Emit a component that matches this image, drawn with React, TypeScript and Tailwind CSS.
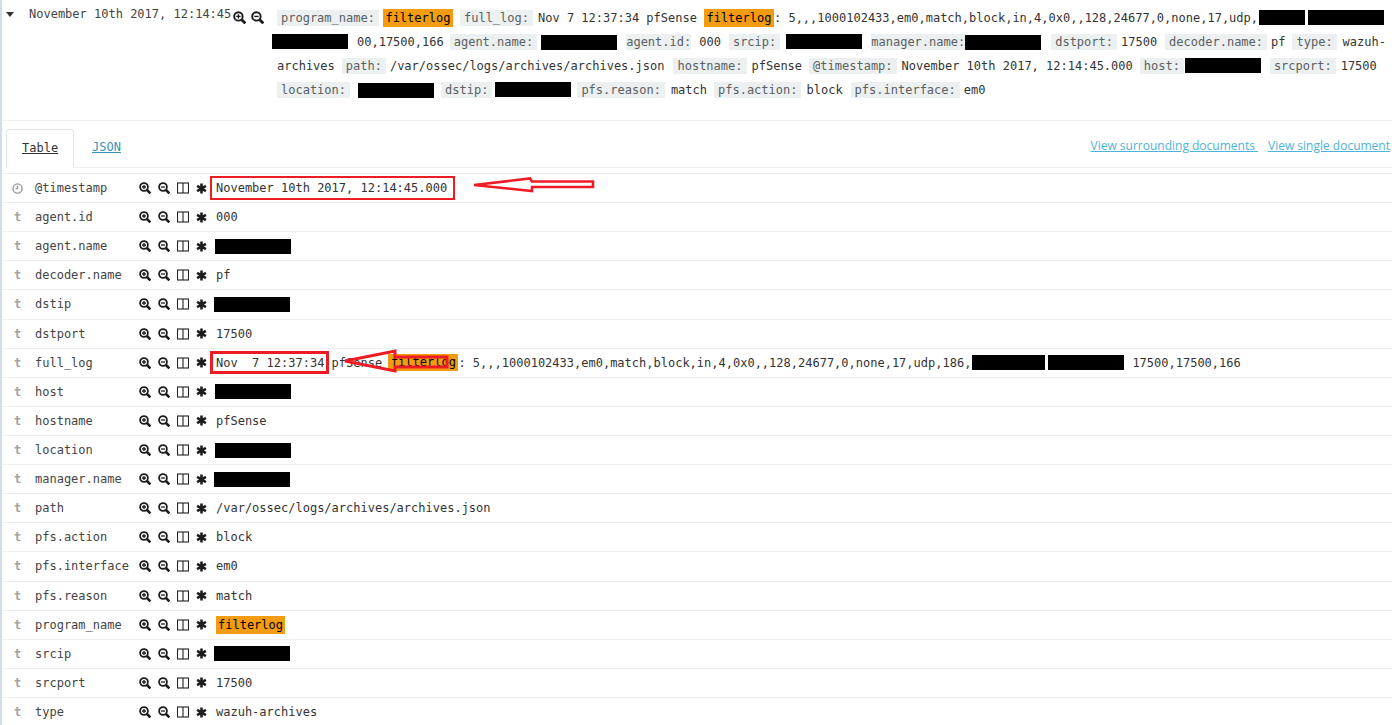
import React from "react";

const MONO = "font-['DejaVu_Sans_Mono',monospace] text-[12px]";

function L({ children, className = "", tight = false }: { children: React.ReactNode; className?: string; tight?: boolean }) {
  return (
    <span className={`h-[16px] leading-[16px] bg-[#ecf0f1] text-[#5a5f61] whitespace-pre ${tight ? "" : "px-[4px]"} ${className}`}>
      {children}
    </span>
  );
}
function V({ children, className = "" }: { children: React.ReactNode; className?: string }) {
  return <span className={`whitespace-pre text-[#333] ${className}`}>{children}</span>;
}
function B({ className = "" }: { className?: string }) {
  return <span className={`inline-block bg-black w-[76px] h-[15px] ${className}`} />;
}
function HL({ children, className = "" }: { children: React.ReactNode; className?: string }) {
  return <span className={`h-[18px] leading-[18px] px-[2.5px] bg-[#f39c12] text-black whitespace-pre ${className}`}>{children}</span>;
}

function ZoomIn({ className = "w-[12px] h-[12px]" }: { className?: string }) {
  return (
    <svg viewBox="0 0 12 12" className={className} fill="none" stroke="#1c1c1c" strokeWidth="1.8">
      <circle cx="5" cy="5" r="3.9" />
      <path d="M8 8l3.4 3.4" strokeWidth="2.6" />
      <path d="M3 5h4M5 3v4" strokeWidth="1.3" />
    </svg>
  );
}
function ZoomOut({ className = "w-[12px] h-[12px] ml-[7px]" }: { className?: string }) {
  return (
    <svg viewBox="0 0 12 12" className={className} fill="none" stroke="#1c1c1c" strokeWidth="1.8">
      <circle cx="5" cy="5" r="3.9" />
      <path d="M8 8l3.4 3.4" strokeWidth="2.6" />
      <path d="M3 5h4" strokeWidth="1.3" />
    </svg>
  );
}
function Columns() {
  return (
    <svg viewBox="0 0 12 12" className="w-[12px] h-[12px] ml-[7px]" fill="none" stroke="#222" strokeWidth="1.1">
      <rect x="0.5" y="1" width="11" height="10" />
      <path d="M6 1v10" />
    </svg>
  );
}
function Asterisk() {
  return (
    <svg viewBox="0 0 12 12" className="w-[11px] h-[11px] ml-[7px]" fill="none" stroke="#1c1c1c" strokeWidth="2.8">
      <path d="M6 .5v11M1.2 3.2l9.6 5.6M10.8 3.2l-9.6 5.6" />
    </svg>
  );
}

function Row({ type = "t", name, children }: { type?: string; name: string; children?: React.ReactNode }) {
  return (
    <div className="h-[29.11px] flex items-center border-b border-[#ecf0f1] shrink-0">
      <span className="w-[33px] pl-[12px] text-[#a3a3a3] flex items-center font-bold">
        {type === "clock" ? (
          <svg viewBox="0 0 12 12" className="w-[11px] h-[11px] -ml-[2px]" fill="none" stroke="#9a9a9a" strokeWidth="1.5">
            <circle cx="6" cy="6" r="5" />
            <path d="M6 3v3.2H4" />
          </svg>
        ) : (
          "t"
        )}
      </span>
      <span className="w-[104px] text-[#444] whitespace-pre">{name}</span>
      <span className="flex items-center w-[77px]">
        <ZoomIn />
        <ZoomOut />
        <Columns />
        <Asterisk />
      </span>
      <span className="flex items-center whitespace-pre text-[#333]">{children}</span>
    </div>
  );
}

const RB = ({ className = "w-[76px]" }: { className?: string }) => <span className={`inline-block bg-black h-[15px] ${className}`} />;

export default function App() {
  return (
    <div className={`relative w-[1392px] h-[725px] overflow-hidden bg-white border-l-2 border-[#d4dce8] ${MONO}`}>
      <div className="h-[121px] border-b border-[#ecf0f1] flex">
        <div className="w-[275px] shrink-0 flex items-start pt-[8px] pl-[4px]">
          <span className="mt-[4px] w-0 h-0 border-x-[4px] border-x-transparent border-t-[5px] border-t-[#333]" />
          <span className="ml-[15px] text-[#444] whitespace-pre leading-[12px]">November 10th 2017, 12:14:45</span>
          <ZoomIn className="w-[13px] h-[13px] ml-[2px] mt-[3px]" />
          <ZoomOut className="w-[13px] h-[13px] ml-[5px] mt-[3px]" />
        </div>
        <div className="pt-[6px] flex flex-col text-[#333]">
          <div className="h-6 flex items-center">
            <L>program_name:</L>
            <HL className="ml-[4px]">filterlog</HL>
            <L className="ml-[7px]">full_log:</L>
            <V className="ml-[5px]">Nov 7 12:37:34 pfSense</V>
            <HL className="ml-[7px]">filterlog</HL>
            <V>: 5,,,1000102433,em0,match,block,in,4,0x0,,128,24677,0,none,17,udp,</V>
            <span className="inline-block bg-black w-[46px] h-[15px] ml-[1px] -mt-[1px]" />
            <B className="ml-[3px] -mt-[1px]" />
          </div>
          <div className="h-6 flex items-center -ml-[5px]">
            <B className="-mt-[1px]" />
            <V className="ml-[9px]">00,17500,166</V>
            <L className="ml-[6px]">agent.name:</L>
            <B className="ml-[4px]" />
            <L className="ml-[9px]" tight>agent.id:</L>
            <V className="ml-[8px]">000</V>
            <L className="ml-[8px]">srcip:</L>
            <B className="ml-[6px] -mt-[1px]" />
            <L className="ml-[9px]" tight>manager.name:</L>
            <B />
            <L className="ml-[10px]">dstport:</L>
            <V className="ml-[4px]">17500</V>
            <L className="ml-[8px]">decoder.name:</L>
            <V className="ml-[4px]">pf</V>
            <L className="ml-[7px]">type:</L>
            <V className="ml-[6px]">wazuh-</V>
          </div>
          <div className="h-6 flex items-center">
            <V>archives</V>
            <L className="ml-[7px]">path:</L>
            <V className="ml-[4px]">/var/ossec/logs/archives/archives.json</V>
            <L className="ml-[9px]">hostname:</L>
            <V className="ml-[5px]">pfSense</V>
            <L className="ml-[7px]">@timestamp:</L>
            <V className="ml-[5px]">November 10th 2017, 12:14:45.000</V>
            <L className="ml-[7px]">host:</L>
            <B className="ml-[1px] -mt-[1px]" />
            <L className="ml-[9px]">srcport:</L>
            <V className="ml-[5px]">17500</V>
          </div>
          <div className="h-6 flex items-center">
            <L>location:</L>
            <B className="ml-[8px]" />
            <L className="ml-[7px]">dstip:</L>
            <B className="ml-[3px] -mt-[1px]" />
            <L className="ml-[6px]">pfs.reason:</L>
            <V className="ml-[6px]">match</V>
            <L className="ml-[7px]">pfs.action:</L>
            <V className="ml-[5px]">block</V>
            <L className="ml-[8px]">pfs.interface:</L>
            <V className="ml-[4px]">em0</V>
          </div>
        </div>
      </div>

      <div className="h-[47px] flex items-end ml-[4px] border-b border-[#ecf0f1] relative">
        <div className="w-[68px] h-[39px] border border-b-0 border-[#e3e7ea] rounded-t-[3px] bg-white flex items-center pl-[15px] pb-[2px] -mb-[1px]">
          <span className="underline text-[#333]">Table</span>
        </div>
        <div className="h-[38px] flex items-center pl-[18px] pb-[2px]">
          <span className="underline text-[#3a8fb7]">JSON</span>
        </div>
        <div className="ml-auto self-start mt-[17px] flex font-['Open_Sans',sans-serif] text-[12px] leading-[16px] text-[#4db3d9] mr-[2px]">
          <a className="underline whitespace-pre">View surrounding documents </a>
          <a className="underline ml-[10px] whitespace-pre">View single document</a>
        </div>
      </div>

      <div className="mt-[5px] border-t border-[#ecf0f1] flex flex-col">
        <Row type="clock" name="@timestamp">November 10th 2017, 12:14:45.000</Row>
        <Row name="agent.id">000</Row>
        <Row name="agent.name"><RB className="w-[76px] -ml-[1px]" /></Row>
        <Row name="decoder.name">pf</Row>
        <Row name="dstip"><RB className="w-[76px] -ml-[2px]" /></Row>
        <Row name="dstport">17500</Row>
        <Row name="full_log">
          Nov  7 12:37:34 pfSense <span className="bg-[#f39c12] text-black px-[2.5px] -ml-[1px] leading-[17px]">filterlog</span>: 5,,,1000102433,em0,match,block,in,4,0x0,,128,24677,0,none,17,udp,186,
          <RB className="w-[73px] ml-[1px]" /><RB className="w-[76px] ml-[3px]" /><span className="ml-[8px]">17500,17500,166</span>
        </Row>
        <Row name="host"><RB className="w-[76px] -ml-[1px]" /></Row>
        <Row name="hostname">pfSense</Row>
        <Row name="location"><RB className="w-[76px] -ml-[1px]" /></Row>
        <Row name="manager.name"><RB className="w-[76px] -ml-[2px]" /></Row>
        <Row name="path">/var/ossec/logs/archives/archives.json</Row>
        <Row name="pfs.action">block</Row>
        <Row name="pfs.interface">em0</Row>
        <Row name="pfs.reason">match</Row>
        <Row name="program_name"><span className="bg-[#f39c12] text-black px-[2px] leading-[18px]">filterlog</span></Row>
        <Row name="srcip"><RB className="w-[76px] -ml-[2px]" /></Row>
        <Row name="srcport">17500</Row>
        <Row name="type">wazuh-archives</Row>
      </div>

      <div className="absolute left-[208px] top-[176px] w-[245px] h-[24px] border-2 border-[#ed1c24]" />
      <div className="absolute left-[208px] top-[351px] w-[119px] h-[23px] border-[3px] border-[#ed1c24]" />
      <svg className="absolute left-[470px] top-[176px]" width="126" height="18" viewBox="0 0 126 18" fill="white" stroke="#ed1c24" strokeWidth="2.6">
        <path d="M2 9L58 2.5L60 5.5H121V11H60V15Z" />
      </svg>
      <svg className="absolute left-[340px] top-[349px]" width="120" height="26" viewBox="0 0 120 26" fill="none" stroke="#ed1c24" strokeWidth="3">
        <path d="M3 12L53 2V8H105V18H53V22Z" />
      </svg>
    </div>
  );
}
